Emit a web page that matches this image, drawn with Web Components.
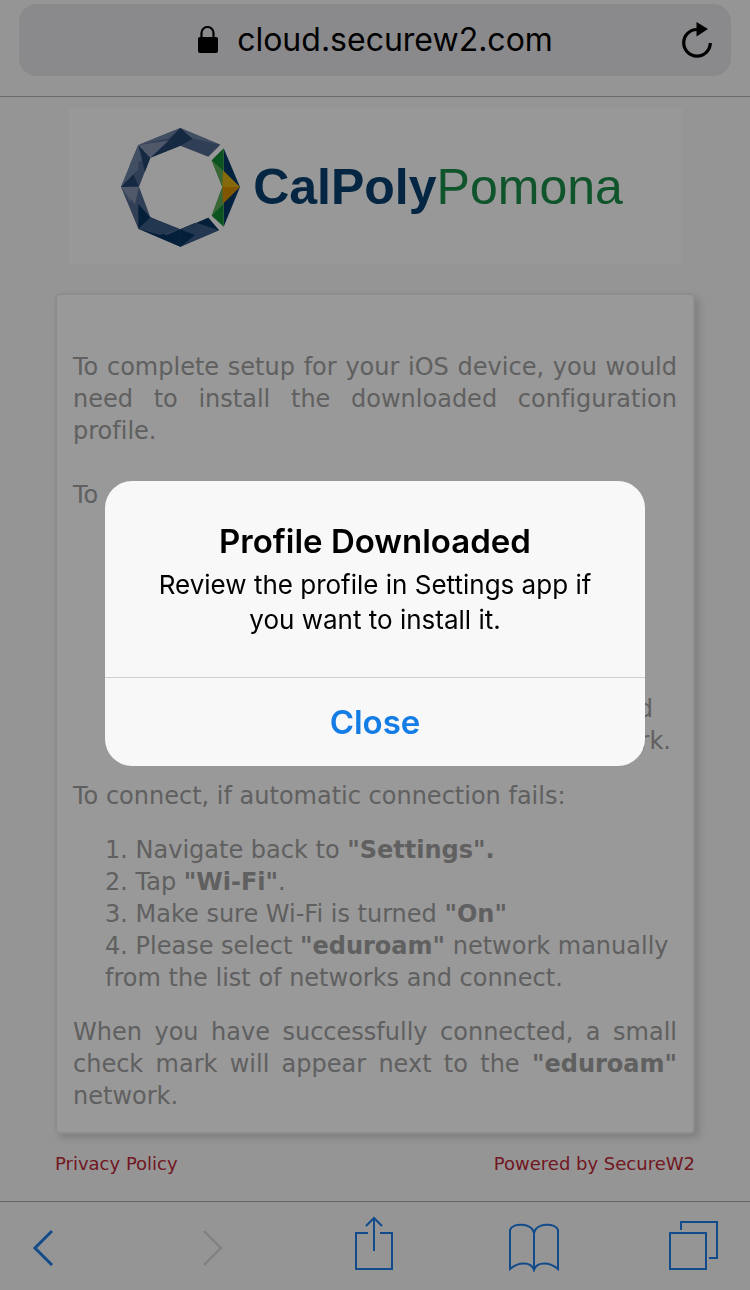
<!DOCTYPE html>
<html lang="en">
<head>
<meta charset="utf-8">
<meta name="viewport" content="width=device-width, initial-scale=1">
<title>cloud.securew2.com</title>
<style>
html,body{margin:0;height:100%;background:#f8f8f8}
body{font-family:"DejaVu Sans",Verdana,sans-serif;font-variant-ligatures:none}
</style>
</head>
<body>
<safari-window></safari-window>
<script>
function define(name, html) {
  const template = document.createElement('template');
  template.innerHTML = html;
  customElements.define(name, class extends HTMLElement {
    constructor() {
      super();
      this.attachShadow({ mode: 'open' }).append(template.content.cloneNode(true));
    }
  });
}

define('address-bar', `
<style>
:host{display:block;padding:4px 19px 20px;border-bottom:1px solid #b0b0b0;background:#f8f8f8}
.field{display:grid;grid-template-columns:50px 1fr 50px;align-items:center;height:72px;border-radius:18px;background:#e6e6e9}
.site{grid-column:2;display:flex;align-items:center;justify-content:center;gap:18px;font-family:Inter,"Liberation Sans",sans-serif;font-size:32px;line-height:40px;color:#000}
button{grid-column:3;display:flex;padding:0;border:0;background:none}
svg{display:block}
</style>
<div class="field">
  <div class="site">
    <svg width="22" height="28" viewBox="0 0 22 28"><path d="M4.500 13V7a6 6 0 0 1 12 0V13" fill="none" stroke="#000" stroke-width="2.200"/><rect x="1" y="11" width="20" height="16" rx="2"/></svg>
    <span>cloud.securew2.com</span>
  </div>
  <button aria-label="Reload"><svg width="32" height="38" viewBox="0 0 32 38"><path d="M16 8.500A13.300 13.300 0 1 0 29.300 22" fill="none" stroke="#000" stroke-width="3.200"/><path d="M15.500 1v14.500l11.500-7.500z"/></svg></button>
</div>`);

define('campus-logo', `
<style>
:host{display:flex;align-items:center;justify-content:center;gap:12px;box-sizing:border-box;height:156px;padding:2px 8px 0 0;background:#fdfdfd}
svg{display:block;flex:none}
.name{font:50px/60px "Liberation Sans",Arial,sans-serif;color:#198c48;white-space:nowrap}
b{color:#08406e}
</style>
<svg width="121" height="121" viewBox="60 54 363 363" role="img" aria-label="Octagon">
  <path fill="#53698f" d="M241 57L361 107L325 143L241 110L151 146L117 233L151 325L241 361L325 326L357 364L241 413L115 359L63 234L115 108Z"/>
  <path fill="#6f83a3" d="M241 57L115 108L205 88ZM241 57L361 107L275 88ZM115 108L88 170L150 146ZM63 234L117 233L90 280Z"/>
  <path fill="#24466f" d="M241 57V110L151 146L205 95ZM115 108L151 146L135 188ZM63 234L117 233L97 190ZM241 57L278 90L241 110Z"/>
  <path fill="#8595b0" d="M115 108L151 146L205 95ZM63 234L117 233L105 285Z"/>
  <path fill="#6f83a3" d="M63 234L115 108V180Z"/>
  <path fill="#063562" d="M115 359V285L151 325L180 340ZM115 359L241 413V361L200 378L180 370ZM241 361L285 342L270 400L241 413Z"/>
  <path fill="#3c5c88" d="M115 359L151 325L200 345L241 361L180 378ZM241 361L290 342L357 364L241 413Z"/>
  <path fill="#053562" d="M241 361L285 378L241 413ZM325 326L357 364L290 342Z"/>
  <path fill="#053a67" d="M371 118L420 234L371 353Z"/>
  <path fill="#148c35" d="M371 118V353L335 320L367 234L335 154Z"/>
  <path fill="#62ad58" d="M335 154L370 185V285L335 320L367 234Z"/>
  <path fill="#e0b012" d="M369 184L420 234H367Z"/>
  <path fill="#d59100" d="M367 234H420L369 284Z"/>
</svg>
<div class="name"><b>CalPoly</b>Pomona</div>`);

define('guide-card', `
<style>
:host{display:block;padding:56px 16px 20px;border:2px solid #ececec;border-radius:5px;background:#fff;box-shadow:4px 4px 7px #d4d4d4;font-size:24px;line-height:32px;color:#a0a0a0}
::slotted(p){margin:0 0 22px;text-align:justify}
::slotted(p.intro){margin-bottom:32px}
::slotted(p:last-child){margin-bottom:0}
::slotted(ol){margin:0 0 22px;padding:0 0 0 32px;list-style-position:inside}
::slotted(.steps){display:flex;flex-direction:column;justify-content:flex-end;align-items:flex-end;min-height:224px;margin-bottom:23px}
</style>
<slot></slot>`);

define('page-links', `
<style>
:host{display:flex;justify-content:space-between;font-size:18px;line-height:24px}
::slotted(a){color:#be2837;text-decoration:none}
</style>
<slot></slot>`);

define('tool-bar', `
<style>
:host{display:grid;grid-template-columns:170fr 152fr 154fr 160fr 50fr;align-items:center;height:88px;padding:0 32px;border-top:1px solid #a8a8a8;background:#f8f8f8;color:#1d7ee8}
button{display:block;justify-self:start;padding:0;border:0;background:none;color:inherit}
button:disabled{color:#d4d4d4}
svg{display:block;fill:none;stroke:currentColor;stroke-width:2}
</style>
<button aria-label="Back"><svg width="22" height="40" viewBox="0 0 22 40" style="stroke-width:3"><path d="M20 5L3 22L20 39"/></svg></button>
<button aria-label="Forward" disabled><svg width="22" height="40" viewBox="0 0 22 40"><path d="M2 5L19 22L2 39"/></svg></button>
<button aria-label="Share"><svg width="40" height="60" viewBox="0 0 40 60"><path d="M14 17H2V53H38V17H26M20 35V2M12 10L20 2L28 10"/></svg></button>
<button aria-label="Bookmarks"><svg width="52" height="52" viewBox="0 0 52 52"><path d="M26 50V13C24 3 5 2 2 10V49C10 42 23 41 26 50C29 41 42 42 50 49V10C47 2 28 3 26 13"/></svg></button>
<button aria-label="Tabs"><svg width="50" height="52" viewBox="0 0 50 52"><path d="M2 13H38V49H2ZM13 10V2H49V38H41"/></svg></button>`);

define('alert-dialog', `
<style>
:host{position:fixed;inset:0;display:flex;align-items:center;justify-content:center;padding-bottom:43px;background:rgba(0,0,0,.4);font-family:Inter,"Liberation Sans",sans-serif}
.box{width:72%;border-radius:27px;background:#f8f8f8;color:#000;text-align:center;overflow:hidden}
.text{padding:38px 40px 40px}
h1{margin:0 0 4px;font-size:33px;line-height:44px;font-weight:600}
p{margin:0 auto;max-width:440px;font-size:26px;line-height:35px}
button{display:block;width:100%;height:89px;padding:0;border:0;border-top:1px solid #d0d0d2;background:none;font:600 33px/40px Inter,"Liberation Sans",sans-serif;color:#147ce5}
</style>
<div class="box" role="alertdialog" aria-labelledby="t">
  <div class="text"><h1 id="t"><slot name="title"></slot></h1><p><slot></slot></p></div>
  <button><slot name="action"></slot></button>
</div>`);

define('safari-window', `
<style>
:host{display:flex;flex-direction:column;min-height:100%}
main{flex:1;padding:11px 55px 24px}
campus-logo{margin:0 13px 29px 14px}
page-links{margin-top:18px}
.and{margin-right:24px}
.net{margin-right:6px}
</style>
<address-bar></address-bar>
<main>
  <campus-logo></campus-logo>
  <guide-card>
    <p class="intro">To complete setup for your iOS device, you would need to install the downloaded configuration profile.</p>
    <p>To</p>
    <div class="steps"><span class="and">d</span><span class="net">rk.</span></div>
    <p>To connect, if automatic connection fails:</p>
    <ol>
      <li>Navigate back to <b>"Settings".</b></li>
      <li>Tap <b>"Wi-Fi"</b>.</li>
      <li>Make sure Wi-Fi is turned <b>"On"</b></li>
      <li>Please select <b>"eduroam"</b> network manually from the list of networks and connect.</li>
    </ol>
    <p>When you have successfully connected, a small check mark will appear next to the <b>"eduroam"</b> network.</p>
  </guide-card>
  <page-links><a href="#privacy">Privacy Policy</a><a href="#securew2">Powered by SecureW2</a></page-links>
</main>
<tool-bar></tool-bar>
<alert-dialog><span slot="title">Profile Downloaded</span>Review the profile in Settings app if you want to install it.<span slot="action">Close</span></alert-dialog>`);
</script>
</body>
</html>
